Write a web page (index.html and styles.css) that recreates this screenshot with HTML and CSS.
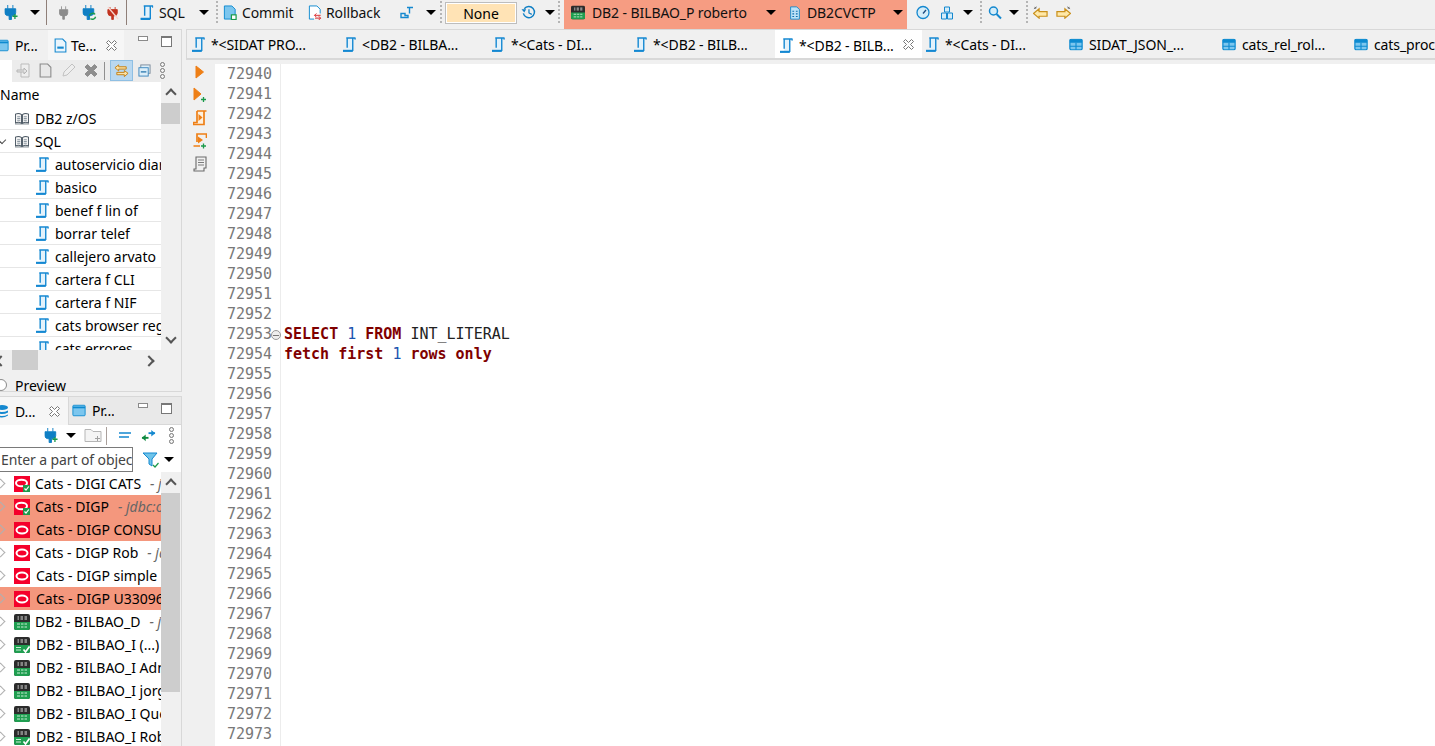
FILE: index.html
```html
<!DOCTYPE html>
<html lang="en">
<head>
<meta charset="utf-8">
<title>DBeaver</title>
<link rel="stylesheet" href="styles.css">
</head>
<body>
<svg class="sprite" width="0" height="0">
  <defs>
    <symbol id="script" viewBox="0 0 14 16"><path d="M4.500 2H10V14H4.500Z" fill="#e3f2fb"/><path d="M3.500 1H13.500M4.500 1V11.500M10.500 1V15M0 14.800H10.500" fill="none" stroke="#1488d2" stroke-width="1.500"/><path d="M0 14.800H10.500" stroke="#1488d2" stroke-width="2.200"/><path d="M13 1V3" stroke="#1488d2" stroke-width="1.200"/></symbol>
    <symbol id="table" viewBox="0 0 16 14"><rect x="1" y="1" width="14" height="12" rx="1.500" fill="#7cc6ee" stroke="#0d8ad0" stroke-width="1.400"/><rect x="1" y="1" width="14" height="4" fill="#0d8ad0"/><path d="M1 9H15M8 5V13" stroke="#0d8ad0" stroke-width="1.300"/></symbol>
    <symbol id="book" viewBox="0 0 16 14"><path d="M.5 2Q4.500 .5 7.500 2.500V12.500Q4.500 10.500 .5 12ZM15.500 2Q11.500 .5 8.500 2.500V12.500Q11.500 10.500 15.500 12Z" fill="#f4f4f4" stroke="#4f5b66" stroke-width="1.200"/><path d="M2.500 5H6M2.500 7H6M2.500 9H6M10 5H13.500M10 7H13.500M10 9H13.500" stroke="#7d8a96"/><path d="M0 13.300H16" stroke="#4f5b66"/></symbol>
    <symbol id="oracle" viewBox="0 0 16 16"><rect width="16" height="16" fill="#f5002b"/><ellipse cx="8" cy="8" rx="5.500" ry="3.500" fill="none" stroke="#fff" stroke-width="2"/></symbol>
    <symbol id="oracleok" viewBox="0 0 16 16"><rect width="16" height="16" fill="#f5002b"/><ellipse cx="7.500" cy="7" rx="5.500" ry="3.300" fill="none" stroke="#fff" stroke-width="2"/><rect x="9" y="9" width="7" height="7" fill="#1f9a4c"/><path d="M10.500 12.500L12 14L14.800 10.500" fill="none" stroke="#fff" stroke-width="1.200"/></symbol>
    <symbol id="db2" viewBox="0 0 16 16"><rect width="16" height="16" rx="2" fill="#2c2c2c"/><path d="M0 8H16V14Q16 16 14 16H2Q0 16 0 14Z" fill="#1f9e50"/><path d="M3.500 3H5M6.500 3H9M10.500 3H13M3.500 5H5M6.500 5H9M10.500 5H13" stroke="#ddd"/><path d="M3 10H6M7 10H9.500M10.500 10H13M3 13H6M7 13H9.500M10.500 13H13" stroke="#c9efd6"/></symbol>
    <symbol id="db2ok" viewBox="0 0 16 16"><rect width="16" height="16" rx="2" fill="#2c2c2c"/><path d="M0 8H16V14Q16 16 14 16H2Q0 16 0 14Z" fill="#1f9e50"/><path d="M3.500 3H5M6.500 3H9M10.500 3H13M3.500 5H5M6.500 5H9M10.500 5H13" stroke="#ddd"/><path d="M2 10.500H7M2 13H7" stroke="#c9efd6"/><path d="M9.500 12.500L11.500 15L15.500 9.500" fill="none" stroke="#fff" stroke-width="1.700"/></symbol>
    <symbol id="plug" viewBox="0 0 14 16"><path d="M3.500 0V4M9 0V4M.5 4H12V8Q12 11.500 7.500 11.500V15.500H5V11.500Q.5 11.500 .5 8Z" fill="#0f7fc4" stroke="#0f7fc4"/></symbol>
    <symbol id="run" viewBox="0 0 10 14"><path d="M1 1L8.500 7L1 13Z" fill="#ee7f16" stroke="#ee7f16"/></symbol>
    <symbol id="close" viewBox="0 0 11 11"><path d="M.5 2.500L2.500 .5L5.500 3.500L8.500 .5L10.500 2.500L7.500 5.500L10.500 8.500L8.500 10.500L5.500 7.500L2.500 10.500L.5 8.500L3.500 5.500Z" fill="#fff" stroke="#777"/></symbol>
    <symbol id="yarrow" viewBox="0 0 16 14"><path d="M.5 8L6.500 3V6H15V11H6.500V13Z" fill="#ffe9a8" stroke="#c9901c" stroke-width="1.300"/><path d="M2 1L3 3M4 1L1 3" stroke="#666"/></symbol>
  </defs>
</svg>

<div class="app">
  <header class="toolbar">
    <svg class="i14 ml4" viewBox="0 0 14 16"><use href="#plug"/><path d="M8.500 12H14M11.200 9.500V15" stroke="#1a9a4a" stroke-width="1.400"/></svg>
    <span class="caret ml12"></span>
    <span class="vsep ml6"></span>
    <svg class="i10" viewBox="0 0 12 16"><path d="M3 0V4M8 0V4M.5 4H10.500V8Q10.500 11.500 6.500 11.500V15.500H4.500V11.500Q.5 11.500 .5 8Z" fill="#8c8c8c" stroke="#8c8c8c"/></svg>
    <svg class="i15 ml13" viewBox="0 0 15 16"><use href="#plug" width="14" height="16"/><path d="M7.500 11.500A3.500 3.500 0 0 1 13.500 10M14 12.500A3.500 3.500 0 0 1 8.500 14.500" fill="none" stroke="#1a9a4a" stroke-width="1.500"/></svg>
    <svg class="i12 ml10" viewBox="0 0 14 16"><path d="M3.500 1V4M9.500 1V4M1 4H12V8Q12 11.500 7.500 11.500V15.500H5.500V11.500Q1 11.500 1 8Z" fill="#c2331f" stroke="#c2331f"/><path d="M1 1L13 15" stroke="#f7d7cf" stroke-width="1.500"/></svg>
    <span class="vsep ml7"></span>
    <svg class="i14 ml13" viewBox="0 0 14 16"><use href="#script"/></svg>
    <span class="tbtext ml5 w40">SQL</span>
    <span class="caret"></span>
    <span class="dots ml7"></span>
    <svg class="i14 ml5" viewBox="0 0 14 16"><path d="M1 1H9L12.500 4.500V15H1Z" fill="#7cc6ee" stroke="#0d8ad0"/><rect x="8.500" y="10.500" width="5" height="5" fill="#fff" stroke="#1a9a4a" stroke-width="1.300"/></svg>
    <span class="tbtext ml5 w66">Commit</span>
    <svg class="i14" viewBox="0 0 14 16"><path d="M6 15H1V1H9L12.500 4.500V9" fill="#fff" stroke="#0d8ad0"/><path d="M6.500 11H13M8.500 9L6.500 11L8.500 13M7 14H13M11 12L13 14L11 16" fill="none" stroke="#d9252a"/></svg>
    <span class="tbtext ml4 w74">Rollback</span>
    <svg class="i14" viewBox="0 0 14 14"><path d="M1 8H5V10H8V12H1ZM7 2H13M9.500 2V8" fill="none" stroke="#1488cf" stroke-width="1.400"/></svg>
    <span class="caret ml12"></span>
    <span class="dots ml4"></span>
    <span class="nonebox ml3">None</span>
    <svg class="i15 ml4" viewBox="0 0 15 16"><path d="M3 4A6 6 0 1 1 2 9" fill="none" stroke="#0f7fc4" stroke-width="1.500"/><path d="M0 4.500H5L3 8Z" fill="#0f7fc4"/><path d="M8 4.500V8.500L11 10" fill="none" stroke="#0f7fc4" stroke-width="1.300"/></svg>
    <span class="caret ml9"></span>
    <span class="dots ml3"></span>
    <div class="conn ml4">
      <svg class="i14 ml7" viewBox="0 0 16 16"><use href="#db2"/></svg>
      <span class="tbtext ml7 w174">DB2 - BILBAO_P roberto</span>
      <span class="caret"></span>
      <svg class="i12 ml13" viewBox="0 0 12 16"><path d="M1 1H8L11 4V15H1Z" fill="#bfe3f7" stroke="#0d8ad0"/><path d="M3 6H5M7 6H9M3 9H5M7 9H9M3 12H5M7 12H9" stroke="#0d6fb0" stroke-width="1.300"/></svg>
      <span class="tbtext ml6 w86">DB2CVCTP</span>
      <span class="caret"></span>
    </div>
    <svg class="i14 ml9" viewBox="0 0 14 14"><circle cx="7" cy="7" r="6" fill="#d5edf9" stroke="#1488cf" stroke-width="1.300"/><path d="M7 8L10 4.500" stroke="#1a4a80" stroke-width="1.300"/></svg>
    <svg class="i12 ml11" viewBox="0 0 12 14"><path d="M3.500 1H8.500V6H3.500ZM.5 7H5.500V13H.5ZM6.500 7H11.500V13H6.500Z" fill="#d5edf9" stroke="#1488cf"/></svg>
    <span class="caret ml10"></span>
    <span class="dots ml7"></span>
    <svg class="i14 ml6" viewBox="0 0 14 14"><circle cx="5.500" cy="5.500" r="4" fill="#d5edf9" stroke="#1488cf" stroke-width="1.500"/><path d="M8.500 8.500L13 13" stroke="#1488cf" stroke-width="2"/></svg>
    <span class="caret ml7"></span>
    <span class="dots ml7"></span>
    <svg class="i15 ml5" viewBox="0 0 16 14"><use href="#yarrow"/></svg>
    <svg class="i15 ml8 flip" viewBox="0 0 16 14"><use href="#yarrow"/></svg>
  </header>

  <main class="workspace">
    <aside class="leftcol">
      <section class="panel panel-top">
        <div class="viewtabs">
          <div class="vtab w48 first"><svg class="i14 cut" viewBox="0 0 16 14"><rect x="1" y="1" width="14" height="12" rx="1" fill="#7cc6ee" stroke="#0d8ad0"/><path d="M1 3.500H15" stroke="#0d8ad0" stroke-width="2"/></svg><span>Pr...</span></div>
          <div class="vtab w76 active"><svg class="i13" viewBox="0 0 12 14"><path d="M1 1H8L11 4V13H1Z" fill="#eaf5fc" stroke="#1488cf"/><path d="M3 9H9" stroke="#1488cf" stroke-width="2"/></svg><span>Te...</span><svg class="i11 vclose" viewBox="0 0 11 11"><use href="#close"/></svg></div>
          <div class="winbtns"><span class="minbtn"></span><span class="maxbtn"></span></div>
        </div>
        <div class="viewbar">
          <svg class="i15" viewBox="0 0 15 15"><path d="M5 1H13V14H5Z" fill="#eee" stroke="#bbb"/><path d="M1 7H8V5L11 8L8 11V9H1Z" fill="#e4e4e4" stroke="#b5b5b5"/></svg>
          <svg class="i13 ml8" viewBox="0 0 12 14"><path d="M1 1H8L11 4V13H1Z" fill="#e8e8e8" stroke="#8a8a8a"/></svg>
          <svg class="i15 ml9" viewBox="0 0 15 15"><path d="M2 13L3 9L11 1L14 4L6 12Z" fill="#eee" stroke="#c2c2c2"/></svg>
          <svg class="i14 ml8" viewBox="0 0 14 14"><path d="M1 3.500L3.500 1L7 4.500L10.500 1L13 3.500L9.500 7L13 10.500L10.500 13L7 9.500L3.500 13L1 10.500L4.500 7Z" fill="#8e8e8e" stroke="#8e8e8e"/></svg>
          <span class="barsep"></span>
          <span class="togglebtn"><svg class="i15" viewBox="0 0 16 14"><path d="M1 4L5 1V3H13V5.500H5V7.500ZM15 10L11 7V9H3V11.500H11V13.500Z" fill="#fbe3a8" stroke="#c57f10"/></svg></span>
          <svg class="i13 ml5" viewBox="0 0 14 14"><rect x="3" y="1" width="10" height="9" fill="#dceef9" stroke="#7a8a99"/><rect x="1" y="4" width="10" height="9" fill="#dceef9" stroke="#3c86bd"/><path d="M3 8.500H9" stroke="#1c6ea8" stroke-width="1.300"/></svg>
          <span class="kebab ml9"><i></i><i></i><i></i></span>
        </div>
        <div class="treewrap tree-a">
          <div class="tree">
            <div class="colhead">Name</div>
            <div class="row lined"><svg class="book-i" viewBox="0 0 16 14"><use href="#book"/></svg><span>DB2 z/OS</span></div>
            <div class="row lined"><span class="chev open"></span><svg class="book-i" viewBox="0 0 16 14"><use href="#book"/></svg><span>SQL</span></div>
            <div class="row lined child"><svg class="i13" viewBox="0 0 14 16"><use href="#script"/></svg><span>autoservicio diario</span></div>
            <div class="row lined child"><svg class="i13" viewBox="0 0 14 16"><use href="#script"/></svg><span>basico</span></div>
            <div class="row lined child"><svg class="i13" viewBox="0 0 14 16"><use href="#script"/></svg><span>benef f lin of</span></div>
            <div class="row lined child"><svg class="i13" viewBox="0 0 14 16"><use href="#script"/></svg><span>borrar telef</span></div>
            <div class="row lined child"><svg class="i13" viewBox="0 0 14 16"><use href="#script"/></svg><span>callejero arvato</span></div>
            <div class="row lined child"><svg class="i13" viewBox="0 0 14 16"><use href="#script"/></svg><span>cartera f CLI</span></div>
            <div class="row lined child"><svg class="i13" viewBox="0 0 14 16"><use href="#script"/></svg><span>cartera f NIF</span></div>
            <div class="row lined child"><svg class="i13" viewBox="0 0 14 16"><use href="#script"/></svg><span>cats browser registro</span></div>
            <div class="row lined child"><svg class="i13" viewBox="0 0 14 16"><use href="#script"/></svg><span>cats errores</span></div>
          </div>
          <div class="vscroll"><span class="arrow up"></span><span class="thumb thumb-a"></span><span class="arrow down"></span></div>
        </div>
        <div class="hscroll"><span class="arrow left"></span><span class="hthumb"></span><span class="arrow right"></span></div>
        <div class="preview"><span class="radio"></span><span>Preview</span></div>
      </section>

      <section class="panel panel-bottom">
        <div class="viewtabs tabs-b">
          <div class="vtab w68 active first"><svg class="i14 cut" viewBox="0 0 14 14"><ellipse cx="7" cy="3" rx="6" ry="2.500" fill="#1488cf"/><path d="M1 6Q7 9 13 6V8Q7 11 1 8ZM1 10Q7 13 13 10V11Q7 15 1 11Z" fill="#1488cf"/></svg><span>D...</span><svg class="i11 vclose" viewBox="0 0 11 11"><use href="#close"/></svg></div>
          <div class="vtab w46"><svg class="i14" viewBox="0 0 16 14"><rect x="1" y="1" width="14" height="12" rx="1" fill="#7cc6ee" stroke="#0d8ad0"/><path d="M1 3.500H15" stroke="#0d8ad0" stroke-width="2"/></svg><span>Pr...</span></div>
          <div class="winbtns"><span class="minbtn"></span><span class="maxbtn"></span></div>
        </div>
        <div class="viewbar bar-b">
          <svg class="i14" viewBox="0 0 14 16"><use href="#plug"/><path d="M8.500 12H14M11.200 9.500V15" stroke="#1a9a4a" stroke-width="1.400"/></svg>
          <span class="caret ml8"></span>
          <svg class="folder ml8" viewBox="0 0 18 14"><path d="M1 13V1H7L9 3H17V13Z" fill="#f4f4f4" stroke="#b5b5b5"/><path d="M11 10H16M13.500 7.500V12.500" stroke="#a0a0a0"/></svg>
          <span class="barsep light"></span>
          <svg class="i14 ml11" viewBox="0 0 14 8"><path d="M1 1.500H13M1 5.500H11" stroke="#1488cf" stroke-width="1.500"/></svg>
          <svg class="i15 ml9" viewBox="0 0 16 12"><path d="M1 8.500H8" stroke="#0f8a40" stroke-width="2"/><path d="M5 5L1 8.500L5 12Z" fill="#0f8a40"/><path d="M8 3.500H15" stroke="#1488cf" stroke-width="2"/><path d="M11 0L15 3.500L11 7Z" fill="#1488cf"/></svg>
          <span class="kebab ml13"><i></i><i></i><i></i></span>
        </div>
        <div class="filterbar">
          <input class="filter" type="text" value="Enter a part of object name here" readonly>
          <svg class="i16 ml10" viewBox="0 0 16 16"><path d="M0 1H14L9 7V14L6 12V7Z" fill="#6fc4ea" stroke="#1488cf"/><path d="M10 13L12 15L15.500 11" fill="none" stroke="#1a9a4a" stroke-width="1.200"/></svg>
          <span class="caret ml5"></span>
        </div>
        <div class="treewrap tree-b">
          <div class="tree">
            <div class="row conn-row"><span class="chev"></span><svg class="i16" viewBox="0 0 16 16"><use href="#oracleok"/></svg><span class="label">Cats - DIGI CATS</span><em> - jdbc:oracle:thin</em></div>
            <div class="row conn-row hot"><span class="chev"></span><svg class="i16" viewBox="0 0 16 16"><use href="#oracleok"/></svg><span class="label">Cats - DIGP</span><em> - jdbc:oracle:thin</em></div>
            <div class="row conn-row hot"><span class="chev"></span><svg class="i16" viewBox="0 0 16 16"><use href="#oracle"/></svg><span class="label">Cats - DIGP CONSULTA</span></div>
            <div class="row conn-row"><span class="chev"></span><svg class="i16" viewBox="0 0 16 16"><use href="#oracle"/></svg><span class="label">Cats - DIGP Rob</span><em> - jdbc</em></div>
            <div class="row conn-row"><span class="chev"></span><svg class="i16" viewBox="0 0 16 16"><use href="#oracle"/></svg><span class="label">Cats - DIGP simple</span></div>
            <div class="row conn-row hot"><span class="chev"></span><svg class="i16" viewBox="0 0 16 16"><use href="#oracle"/></svg><span class="label">Cats - DIGP U33096</span></div>
            <div class="row conn-row"><span class="chev"></span><svg class="i16" viewBox="0 0 16 16"><use href="#db2"/></svg><span class="label">DB2 - BILBAO_D</span><em> - jdbc</em></div>
            <div class="row conn-row"><span class="chev"></span><svg class="i16" viewBox="0 0 16 16"><use href="#db2ok"/></svg><span class="label">DB2 - BILBAO_I (...)</span></div>
            <div class="row conn-row"><span class="chev"></span><svg class="i16" viewBox="0 0 16 16"><use href="#db2"/></svg><span class="label">DB2 - BILBAO_I Admin</span></div>
            <div class="row conn-row"><span class="chev"></span><svg class="i16" viewBox="0 0 16 16"><use href="#db2"/></svg><span class="label">DB2 - BILBAO_I jorge</span></div>
            <div class="row conn-row"><span class="chev"></span><svg class="i16" viewBox="0 0 16 16"><use href="#db2"/></svg><span class="label">DB2 - BILBAO_I Query</span></div>
            <div class="row conn-row"><span class="chev"></span><svg class="i16" viewBox="0 0 16 16"><use href="#db2ok"/></svg><span class="label">DB2 - BILBAO_I Roberto</span></div>
          </div>
          <div class="vscroll"><span class="arrow up"></span><span class="thumb thumb-b"></span></div>
        </div>
      </section>
    </aside>

    <section class="editor">
      <nav class="edtabs">
        <div class="etab t151"><svg class="i13" viewBox="0 0 14 16"><use href="#script"/></svg><span>*&lt;SIDAT PRO...</span></div>
        <div class="etab t149"><svg class="i13" viewBox="0 0 14 16"><use href="#script"/></svg><span>&lt;DB2 - BILBA...</span></div>
        <div class="etab t142"><svg class="i13" viewBox="0 0 14 16"><use href="#script"/></svg><span>*&lt;Cats - DI...</span></div>
        <div class="etab t146"><svg class="i13" viewBox="0 0 14 16"><use href="#script"/></svg><span>*&lt;DB2 - BILB...</span></div>
        <div class="etab t147 current"><svg class="i13" viewBox="0 0 14 16"><use href="#script"/></svg><span>*&lt;DB2 - BILB...</span><svg class="i11 eclose" viewBox="0 0 11 11"><use href="#close"/></svg></div>
        <div class="etab t142b"><svg class="i13" viewBox="0 0 14 16"><use href="#script"/></svg><span>*&lt;Cats - DI...</span></div>
        <div class="etab t153"><svg class="i14" viewBox="0 0 16 14"><use href="#table"/></svg><span>SIDAT_JSON_...</span></div>
        <div class="etab t132"><svg class="i14" viewBox="0 0 16 14"><use href="#table"/></svg><span>cats_rel_rol...</span></div>
        <div class="etab t86"><svg class="i14" viewBox="0 0 16 14"><use href="#table"/></svg><span>cats_procesos</span></div>
      </nav>
      <div class="edbody">
        <div class="rail">
          <svg class="i10b" viewBox="0 0 10 16"><path d="M1 2L8.500 8L1 14Z" fill="#ee7f16" stroke="#ee7f16"/></svg>
          <svg class="i13b" viewBox="0 0 14 16"><path d="M1 1L8 7L1 13Z" fill="#ee7f16" stroke="#ee7f16"/><path d="M8 12.500H13M10.500 10V15" stroke="#1a9a4a" stroke-width="1.300"/></svg>
          <svg class="i13b" viewBox="0 0 14 16"><path d="M4 1H13.500M11 1V14.500H.5V12.500H4V1" fill="#fdf0df" stroke="#ee7f16" stroke-width="1.700"/><path d="M5.500 4L9.500 7.500L5.500 11Z" fill="#ee7f16"/></svg>
          <svg class="i13b" viewBox="0 0 14 16"><path d="M4 9V1H13.500V5M.5 13H7" fill="none" stroke="#ee7f16" stroke-width="1.700"/><path d="M5 3.500L10 7L5 10.500Z" fill="#ee7f16"/><path d="M8 13H13M10.500 10.500V15.500" stroke="#1a9a4a" stroke-width="1.300"/></svg>
          <svg class="i13b" viewBox="0 0 14 16"><path d="M3 1H13V12H11V15H1V13H3Z" fill="#f0f0f0" stroke="#6a6a6a" stroke-width="1.100"/><path d="M5 4H11M5 6.500H11M5 9H11" stroke="#7a7a7a"/></svg>
        </div>
        <div class="lines">
          <div class="line"><span class="num">72940</span><span class="code"></span></div>
          <div class="line"><span class="num">72941</span><span class="code"></span></div>
          <div class="line"><span class="num">72942</span><span class="code"></span></div>
          <div class="line"><span class="num">72943</span><span class="code"></span></div>
          <div class="line"><span class="num">72944</span><span class="code"></span></div>
          <div class="line"><span class="num">72945</span><span class="code"></span></div>
          <div class="line"><span class="num">72946</span><span class="code"></span></div>
          <div class="line"><span class="num">72947</span><span class="code"></span></div>
          <div class="line"><span class="num">72948</span><span class="code"></span></div>
          <div class="line"><span class="num">72949</span><span class="code"></span></div>
          <div class="line"><span class="num">72950</span><span class="code"></span></div>
          <div class="line"><span class="num">72951</span><span class="code"></span></div>
          <div class="line"><span class="num">72952</span><span class="code"></span></div>
          <div class="line"><span class="num">72953</span><span class="fold"></span><span class="code"><b>SELECT</b> <i>1</i> <b>FROM</b> INT_LITERAL</span></div>
          <div class="line"><span class="num">72954</span><span class="code"><b>fetch first</b> <i>1</i> <b>rows only</b></span></div>
          <div class="line"><span class="num">72955</span><span class="code"></span></div>
          <div class="line"><span class="num">72956</span><span class="code"></span></div>
          <div class="line"><span class="num">72957</span><span class="code"></span></div>
          <div class="line"><span class="num">72958</span><span class="code"></span></div>
          <div class="line"><span class="num">72959</span><span class="code"></span></div>
          <div class="line"><span class="num">72960</span><span class="code"></span></div>
          <div class="line"><span class="num">72961</span><span class="code"></span></div>
          <div class="line"><span class="num">72962</span><span class="code"></span></div>
          <div class="line"><span class="num">72963</span><span class="code"></span></div>
          <div class="line"><span class="num">72964</span><span class="code"></span></div>
          <div class="line"><span class="num">72965</span><span class="code"></span></div>
          <div class="line"><span class="num">72966</span><span class="code"></span></div>
          <div class="line"><span class="num">72967</span><span class="code"></span></div>
          <div class="line"><span class="num">72968</span><span class="code"></span></div>
          <div class="line"><span class="num">72969</span><span class="code"></span></div>
          <div class="line"><span class="num">72970</span><span class="code"></span></div>
          <div class="line"><span class="num">72971</span><span class="code"></span></div>
          <div class="line"><span class="num">72972</span><span class="code"></span></div>
          <div class="line"><span class="num">72973</span><span class="code"></span></div>
          <div class="line"><span class="num"></span><span class="code"></span></div>
        </div>
      </div>
    </section>
  </main>
</div>
</body>
</html>
```

FILE: styles.css
```css
* { box-sizing: border-box; }
html, body { margin: 0; height: 100%; overflow: hidden; }
body { font: 14px "Noto Sans", "Open Sans", sans-serif; color: #000; background: #f0f0f0; }
.sprite { display: block; width: 0; height: 0; }
svg { display: block; flex: none; }

.app { width: 1435px; height: 746px; display: flex; flex-direction: column; overflow: hidden; }

/* sizes */
.i10 { width: 10px; height: 14px; }
.i11 { width: 11px; height: 11px; }
.i12 { width: 12px; height: 14px; }
.i13 { width: 13px; height: 15px; }
.i14 { width: 14px; height: 15px; }
.i15 { width: 15px; height: 15px; }
.i16 { width: 16px; height: 16px; }
.i10b { width: 10px; height: 16px; }
.i13b { width: 14px; height: 16px; }
.folder { width: 18px; height: 15px; }

/* left offsets */
.ml3 { margin-left: 3px; } .ml4 { margin-left: 4px; } .ml5 { margin-left: 5px; } .ml6 { margin-left: 6px; }
.ml7 { margin-left: 7px; } .ml8 { margin-left: 8px; } .ml9 { margin-left: 9px; }
.ml10 { margin-left: 10px; } .ml11 { margin-left: 11px; } .ml12 { margin-left: 12px; }
.ml13 { margin-left: 13px; } .ml14 { margin-left: 14px; }
.vsep + .i10 { margin-left: 12px; }

/* main toolbar */
.toolbar { height: 29px; flex: none; display: flex; align-items: center; padding-bottom: 4px; }
.tbtext { flex: none; white-space: nowrap; font-size: 14px; letter-spacing: -.1px; line-height: 20px; color: #111; }
.w40 { width: 40px; } .w66 { width: 66px; } .w74 { width: 74px; } .w174 { width: 174px; } .w86 { width: 86px; }
.caret { flex: none; width: 0; height: 0; border: 5px solid transparent; border-top: 5px solid #000; border-bottom: 0; }
.vsep { flex: none; width: 1px; height: 25px; background: #8f7f78; }
.dots { flex: none; width: 2px; height: 24px; background: repeating-linear-gradient(#b5b5b5 0 2px, transparent 2px 4px); }
.nonebox { flex: none; width: 72px; height: 22px; background: #ffe3b5; border: 1px solid #bdbdbd; box-shadow: inset 0 0 0 1px #fff; text-align: center; line-height: 22px; }
.conn { flex: none; width: 343px; height: 29px; margin-bottom: -4px; padding-bottom: 4px; background: #f69c82; display: flex; align-items: center; }
.flip { transform: scaleX(-1); }

/* workspace */
.workspace { flex: 1; min-height: 0; display: flex; }
.leftcol { flex: none; width: 187px; padding-right: 5px; display: flex; flex-direction: column; gap: 4px; }
.panel { border-right: 1px solid #d8d8d8; border-top: 1px solid #d8d8d8; border-bottom: 1px solid #d8d8d8; overflow: hidden; display: flex; flex-direction: column; }
.panel-top { height: 363px; flex: none; }
.panel-bottom { flex: 1; min-height: 0; border-bottom: 0; }

.viewtabs { height: 30px; flex: none; display: flex; align-items: stretch; }
.vtab { flex: none; display: flex; align-items: center; gap: 6px; font-size: 14px; letter-spacing: -.1px; white-space: nowrap; overflow: hidden; }
.vtab.w48 { width: 48px; }
.vtab.w76 { width: 76px; padding-left: 6px; gap: 4px; }
.vtab.w68 { width: 68px; }
.vtab.w46 { width: 46px; padding-left: 3px; }
.vtab.active { background: #f6f6f6; }
.cut { margin-left: -5px; }
.vclose { margin-left: auto; margin-right: 8px; }
.w76 .vclose { margin-right: 7px; }
.winbtns { flex: 1; display: flex; justify-content: flex-end; gap: 13px; padding: 6px 9px 0 0; background: #f0f0f0; }
.minbtn { width: 10px; height: 5px; border: 1px solid #8a8a8a; background: #fff; }
.maxbtn { width: 11px; height: 11px; border: 1px solid #777; border-top-width: 2px; background: #fff; }
.tabs-b { height: 28px; }
.tabs-b .winbtns { background: #e9e9e9; border-bottom: 1px solid #d8d8d8; }
.tabs-b .vtab.w46 { background: #e9e9e9; border-bottom: 1px solid #d8d8d8; border-left: 1px solid #d8d8d8; }

.viewbar { height: 22px; flex: none; display: flex; align-items: center; padding: 0 0 1px 16px; background: linear-gradient(to right, #fff 0 12px, #ececec 12px 160px, #f0f0f0 160px); }
.barsep { flex: none; width: 1px; height: 18px; background: #8f8f8f; margin-left: 6px; margin-right: 5px; }
.barsep.light { background: #a99f9b; margin-left: 4px; margin-right: 0; }
.togglebtn { flex: none; width: 23px; height: 21px; display: flex; align-items: center; justify-content: center; background: #b9d8f0; border: 1px solid #8fbfe3; }
.kebab { flex: none; display: flex; flex-direction: column; gap: 1px; }
.kebab i { width: 5px; height: 5px; border: 1px solid #777; border-radius: 50%; background: #f4f4f4; }
.bar-b { height: 22px; padding-left: 44px; background: #fff; }

/* trees */
.treewrap { flex: none; display: flex; overflow: hidden; }
.tree-a { height: 268px; }
.tree-b { height: 276px; }
.tree { flex: none; width: 161px; background: #fff; overflow: hidden; }
.colhead { height: 25px; line-height: 25px; white-space: nowrap; }
.row { height: 23px; display: flex; align-items: center; white-space: nowrap; overflow: hidden; padding-left: 15px; position: relative; }
.row.lined { border-bottom: 1px solid #e6e6e6; }
.row > span:last-child { margin-left: 6px; }
.child { padding-left: 36px; }
.book-i { width: 14px; height: 13px; }
.chev { position: absolute; left: -3px; top: 8px; width: 7px; height: 7px; border-top: 1.500px solid #b0b0b0; border-right: 1.500px solid #b0b0b0; transform: rotate(45deg); }
.chev.open { left: -1px; top: 7px; width: 6px; height: 6px; border-color: #555; transform: rotate(135deg); }
.row > .chev.open { margin-left: 0; }
.conn-row { padding-left: 14px; }
.conn-row .label { margin-left: 5px; }
.conn-row em { color: #666; margin-left: 9px; }
.hot { background: #f4977d; }

.vscroll { flex: none; width: 19px; background: #f0f0f0; display: flex; flex-direction: column; align-items: center; position: relative; }
.arrow { display: block; width: 8px; height: 8px; border-top: 2px solid #555; border-left: 2px solid #555; }
.arrow.up { transform: rotate(45deg); margin-top: 8px; }
.arrow.down { transform: rotate(-135deg); position: absolute; bottom: 8px; }
.arrow.left { transform: rotate(-45deg); position: absolute; left: -3px; top: 7px; }
.arrow.right { transform: rotate(135deg); position: absolute; left: 145px; top: 7px; }
.thumb { display: block; width: 19px; background: #cdcdcd; }
.thumb-a { height: 21px; margin-top: 5px; }
.thumb-b { height: 199px; margin-top: 5px; }
.hscroll { height: 21px; flex: none; position: relative; }
.hthumb { display: block; position: absolute; left: 12px; top: 0; width: 26px; height: 20px; background: #cdcdcd; }
.preview { flex: 1; min-height: 0; display: flex; align-items: flex-start; overflow: hidden; padding: 5px 0 0 15px; line-height: 20px; position: relative; }
.radio { position: absolute; left: -5px; top: 8px; width: 12px; height: 12px; border: 1px solid #8a8a8a; border-radius: 50%; background: #fff; }

.filterbar { height: 25px; flex: none; display: flex; align-items: center; background: #fff; }
.filter { flex: none; width: 135px; height: 25px; margin-left: -2px; padding: 0 0 0 2px; border: 1px solid #7a7a7a; background: #fff; font: 14px "Noto Sans", sans-serif; letter-spacing: -.1px; color: #444; outline: 0; }

/* editor */
.editor { flex: 1; min-width: 0; display: flex; flex-direction: column; }
.edtabs { height: 31px; flex: none; display: flex; overflow: hidden; border-top: 1px solid #d8d8d8; border-bottom: 2px solid #d8d8d8; border-left: 1px solid #d8d8d8; margin-left: -1px; }
.etab { flex: none; display: flex; align-items: center; gap: 6px; white-space: nowrap; overflow: hidden; padding-left: 5px; font-size: 14px; letter-spacing: -.1px; position: relative; }
.t151 { width: 151px; } .t149 { width: 149px; } .t142 { width: 142px; } .t146 { width: 146px; }
.t147 { width: 147px; } .t142b { width: 142px; padding-left: 4px; } .t153 { width: 153px; } .t132 { width: 132px; } .t86 { width: 86px; }
.current { background: #fff; margin-bottom: -2px; }
.eclose { position: absolute; left: 128px; top: 9px; }
.edbody { flex: 1; min-height: 0; display: flex; padding-top: 4px; background: #f0f0f0; overflow: hidden; }
.rail { flex: none; width: 28px; display: flex; flex-direction: column; align-items: center; gap: 7px; padding-right: 2px; }
.lines { flex: 1; min-width: 0; background: #fff; font: 15px/20px "DejaVu Sans Mono", "Liberation Mono", monospace; }
.line { height: 20px; display: flex; position: relative; }
.num { flex: none; width: 66px; padding-left: 12px; color: #787878; white-space: pre; border-right: 1px solid #ececec; }
.fold { position: absolute; left: 56px; top: 6px; width: 10px; height: 10px; border: 1px solid #999; border-radius: 50%; background: linear-gradient(#777,#777) center / 6px 1px no-repeat #eee; }
.code { flex: 1; padding-left: 3px; white-space: pre; color: #222; }
.code b { color: #7f0000; font-weight: 700; }
.code i { color: #1c55b0; font-style: normal; }
```
